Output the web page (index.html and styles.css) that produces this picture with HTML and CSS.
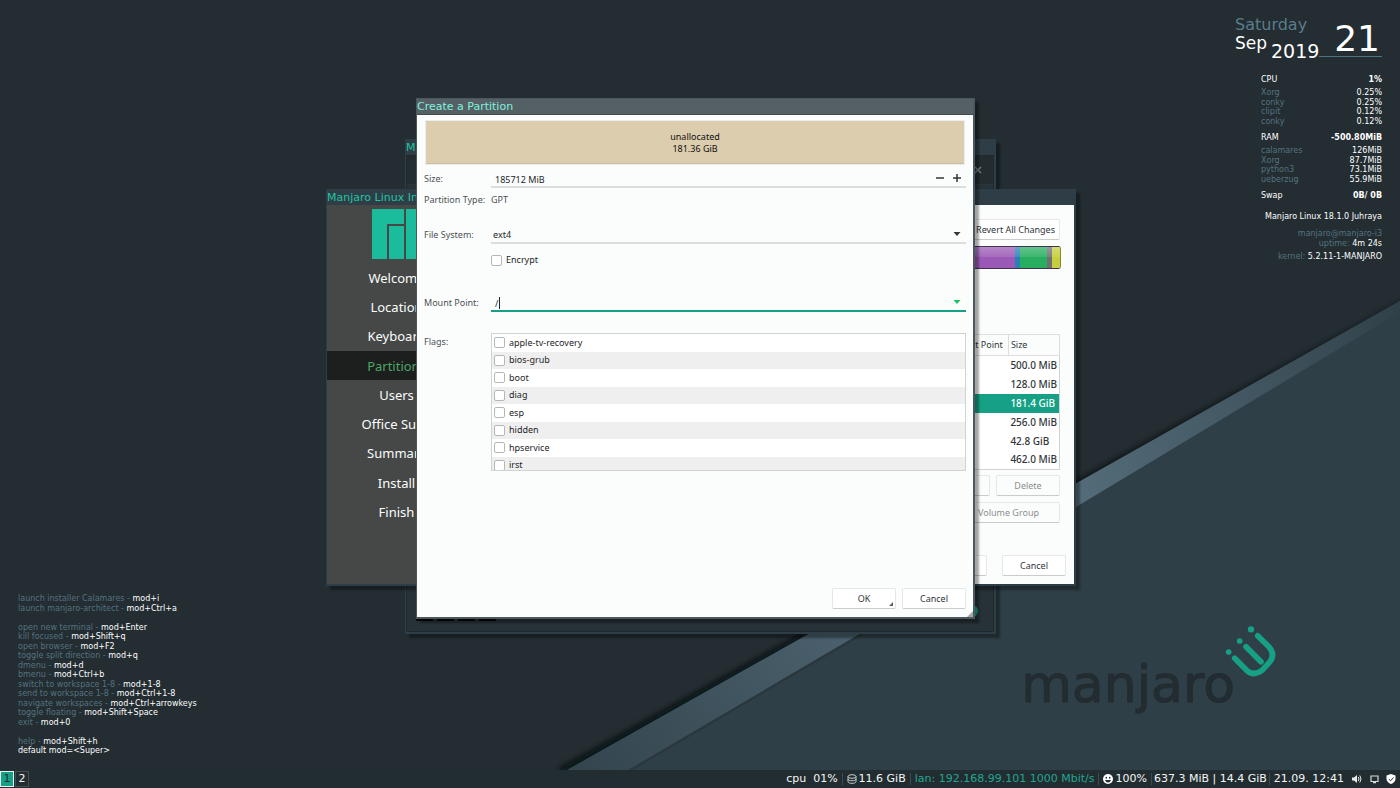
FILE: index.html
```html
<!DOCTYPE html>
<html lang="en">
<head>
<meta charset="utf-8">
<title>Create a Partition</title>
<link rel="stylesheet" href="styles.css">
</head>
<body>
<main class="desktop">
  <svg class="wallpaper" viewBox="0 0 1400 770" preserveAspectRatio="none" aria-hidden="true">
    <defs>
      <linearGradient id="band" gradientUnits="userSpaceOnUse" x1="567" y1="770" x2="1400" y2="301">
        <stop offset="0" stop-color="#33444d"/>
        <stop offset=".32" stop-color="#4a606c"/>
        <stop offset=".58" stop-color="#566f7c"/>
        <stop offset=".8" stop-color="#435863"/>
        <stop offset="1" stop-color="#304048"/>
      </linearGradient>
      <filter id="soft" x="-5%" y="-5%" width="110%" height="110%"><feGaussianBlur stdDeviation="3"/></filter>
    </defs>
    <rect width="1400" height="770" fill="#232d32"/>
    <path d="M560 770 L567 772 L1402 302 Z" fill="#05080a" stroke="#05080a" stroke-width="2" filter="url(#soft)"/>
    <path d="M567 770 L1400 301 V770 Z" fill="#2f3f47"/>
    <path d="M628 771 L1076 508" stroke="#273238" stroke-width="3" opacity=".6"/>
    <path d="M567 770 L1400 301 V312 L1076 507 L628 770 Z" fill="url(#band)"/>
  </svg>

  <div class="brand">
    <span class="brand-name">manjaro</span>
    <svg class="brand-mark" viewBox="645 42 156 156" aria-hidden="true">
      <g fill="none" stroke="#16a085" stroke-width="17" stroke-linecap="round" stroke-linejoin="round">
        <path d="M674 142 L710 178 Q730 197 756 178 L778 154 Q797 132 778 109 L743 74"/>
        <path d="M708 107 L753 152"/>
      </g>
      <g fill="#16a085"><circle cx="656" cy="123" r="8.500"/><circle cx="689" cy="90" r="8.500"/><circle cx="723" cy="55" r="9.500"/></g>
    </svg>
  </div>

  <aside class="conky">
    <div class="date">
      <div class="date-left"><span class="weekday">Saturday</span><span class="month">Sep</span></div>
      <span class="year">2019</span><span class="day">21</span>
    </div>
    <dl class="stats">
      <div class="stat head"><dt>CPU</dt><dd><b>1%</b></dd></div>
      <div class="group">
        <div class="stat"><dt>Xorg</dt><dd>0.25%</dd></div>
        <div class="stat"><dt>conky</dt><dd>0.25%</dd></div>
        <div class="stat"><dt>clipit</dt><dd>0.12%</dd></div>
        <div class="stat"><dt>conky</dt><dd>0.12%</dd></div>
      </div>
      <div class="stat head"><dt>RAM</dt><dd><b>-500.80MiB</b></dd></div>
      <div class="group">
        <div class="stat"><dt>calamares</dt><dd>126MiB</dd></div>
        <div class="stat"><dt>Xorg</dt><dd>87.7MiB</dd></div>
        <div class="stat"><dt>python3</dt><dd>73.1MiB</dd></div>
        <div class="stat"><dt>ueberzug</dt><dd>55.9MiB</dd></div>
      </div>
      <div class="stat head"><dt>Swap</dt><dd><b>0B/ 0B</b></dd></div>
    </dl>
    <p class="release">Manjaro Linux 18.1.0 Juhraya</p>
    <p class="dim">manjaro@manjaro-i3</p>
    <p class="dim">uptime: <span class="lit">4m 24s</span></p>
    <p class="dim kernel">kernel: <span class="lit">5.2.11-1-MANJARO</span></p>
  </aside>

  <ul class="hints">
    <li>launch installer Calamares - <span class="lit">mod+i</span></li>
    <li>launch manjaro-architect - <span class="lit">mod+Ctrl+a</span></li>
    <li></li>
    <li>open new terminal - <span class="lit">mod+Enter</span></li>
    <li>kill focused - <span class="lit">mod+Shift+q</span></li>
    <li>open browser - <span class="lit">mod+F2</span></li>
    <li>toggle split direction - <span class="lit">mod+q</span></li>
    <li>dmenu - <span class="lit">mod+d</span></li>
    <li>bmenu - <span class="lit">mod+Ctrl+b</span></li>
    <li>switch to workspace 1-8 - <span class="lit">mod+1-8</span></li>
    <li>send to workspace 1-8 - <span class="lit">mod+Ctrl+1-8</span></li>
    <li>navigate workspaces - <span class="lit">mod+Ctrl+arrowkeys</span></li>
    <li>toggle floating - <span class="lit">mod+Shift+Space</span></li>
    <li>exit - <span class="lit">mod+0</span></li>
    <li></li>
    <li>help - <span class="lit">mod+Shift+h</span></li>
    <li><span class="lit">default mod=&lt;Super&gt;</span></li>
  </ul>

  <section class="window hello">
    <header class="titlebar">M</header>
    <div class="hello-body">
      <div class="hello-top">
        <button class="hello-close" type="button" aria-label="Close"><svg viewBox="0 0 8 8" width="8" height="8"><path d="M1 1 L7 7 M7 1 L1 7" stroke="#7d8587" stroke-width="1.300"/></svg></button>
      </div>
      <div class="hello-foot">
        <span class="chip"></span><span class="chip"></span><span class="chip"></span><span class="chip"></span>
        <span class="knob"></span>
      </div>
    </div>
  </section>

  <section class="window installer">
    <header class="titlebar">Manjaro Linux In</header>
    <div class="installer-body">
      <nav class="steps">
        <svg class="steps-logo" viewBox="0 0 50 50" width="50" height="50" aria-hidden="true"><path fill="#1abc9c" d="M0 0H32V15H15V50H0Z M17 17H32V50H17Z M34 0H50V50H34Z"/></svg>
        <ol class="steps-list">
          <li>Welcome</li><li>Location</li><li>Keyboard</li><li class="active">Partitions</li><li>Users</li><li>Office Suite</li><li>Summary</li><li>Install</li><li>Finish</li>
        </ol>
      </nav>
      <div class="parts">
        <button class="btn revert" type="button">Revert All Changes</button>
        <div class="disk"><span class="seg purple"></span><span class="seg blue"></span><span class="seg green"></span><span class="seg grey"></span><span class="seg yellow"></span></div>
        <table class="ptable">
          <thead><tr><th class="mount">t Point</th><th>Size</th></tr></thead>
          <tbody>
            <tr><td></td><td>500.0 MiB</td></tr>
            <tr><td></td><td>128.0 MiB</td></tr>
            <tr class="selected"><td></td><td>181.4 GiB</td></tr>
            <tr><td></td><td>256.0 MiB</td></tr>
            <tr><td></td><td>42.8 GiB</td></tr>
            <tr><td></td><td>462.0 MiB</td></tr>
          </tbody>
        </table>
        <div class="btn-row edit-row"><button class="btn" type="button" disabled aria-label="Edit"></button><button class="btn" type="button" disabled>Delete</button></div>
        <div class="btn-row"><button class="btn volume" type="button" disabled>Volume Group</button></div>
        <div class="btn-row nav-row"><button class="btn" type="button" aria-label="Next"></button><button class="btn" type="button">Cancel</button></div>
      </div>
    </div>
  </section>

  <section class="window dialog" role="dialog" aria-labelledby="dialog-title">
    <header class="titlebar" id="dialog-title">Create a Partition</header>
    <form class="dialog-body">
      <div class="space"><span>unallocated</span><span>181.36 GiB</span></div>
      <div class="form">
        <label for="size">Size:</label>
        <div class="field"><input id="size" class="size" type="text" value="185712 MiB">
          <button class="step" type="button" aria-label="Decrease"><svg viewBox="0 0 8 8" width="8" height="8"><path d="M0 4H8" stroke="#31363b" stroke-width="1.500"/></svg></button>
          <button class="step" type="button" aria-label="Increase"><svg viewBox="0 0 8 8" width="8" height="8"><path d="M0 4H8M4 0V8" stroke="#31363b" stroke-width="1.500"/></svg></button>
        </div>
        <span class="type-label">Partition Type:</span><span class="type">GPT</span>
        <label class="low" for="fs">File System:</label>
        <div class="field low"><select id="fs"><option>ext4</option></select><svg class="arrow" viewBox="0 0 8 4" width="8" height="4"><path d="M0.500 0H7.500L4 4Z" fill="#31363b"/></svg></div>
        <label class="encrypt"><input class="tick" type="checkbox">Encrypt</label>
        <label class="low" for="mount">Mount Point:</label>
        <div class="field low focused"><input id="mount" type="text" value="/"><span class="caret"></span><svg class="arrow" viewBox="0 0 8 4" width="8" height="4"><path d="M0.500 0H7.500L4 4Z" fill="#1fbf62"/></svg></div>
        <span class="flags-label">Flags:</span>
        <div class="flags"><div class="flags-list">
          <label><input class="tick" type="checkbox">apple-tv-recovery</label>
          <label><input class="tick" type="checkbox">bios-grub</label>
          <label><input class="tick" type="checkbox">boot</label>
          <label><input class="tick" type="checkbox">diag</label>
          <label><input class="tick" type="checkbox">esp</label>
          <label><input class="tick" type="checkbox">hidden</label>
          <label><input class="tick" type="checkbox">hpservice</label>
          <label><input class="tick" type="checkbox">irst</label>
        </div></div>
      </div>
      <div class="actions"><button class="btn ok" type="button">OK</button><button class="btn" type="button">Cancel</button></div>
      <span class="grip"></span>
    </form>
  </section>
</main>

<footer class="bar">
  <nav class="spaces"><button class="ws current" type="button">1</button><button class="ws" type="button">2</button></nav>
  <div class="status">
    <span class="item cpu"><span>cpu</span><span>01%</span></span>
    <span class="item"><svg viewBox="0 0 10 10" width="10" height="10"><g fill="none" stroke="#c8cdce"><ellipse cx="5" cy="2.500" rx="4" ry="1.800"/><path d="M1 2.500V7.500C1 10 9 10 9 7.500V2.500M1 5C1 7.300 9 7.300 9 5"/></g></svg>11.6 GiB</span>
    <span class="item net">lan: 192.168.99.101 1000 Mbit/s</span>
    <span class="item"><svg viewBox="0 0 10 10" width="10" height="10"><circle cx="5" cy="5" r="5" fill="#fff"/><ellipse cx="3.300" cy="3.700" rx=".8" ry="1" fill="#232d32"/><ellipse cx="6.700" cy="3.700" rx=".8" ry="1" fill="#232d32"/><path d="M2 6H8Q7 8.500 5 8.500T2 6" fill="#232d32"/></svg>100%</span>
    <span class="item tight">637.3 MiB | 14.4 GiB</span>
    <span class="item">21.09. 12:41</span>
  </div>
  <div class="tray">
    <svg viewBox="0 0 10 10" width="10" height="10"><path d="M0 3.500H2L5 1V9L2 6.500H0Z" fill="#e8eaea"/><path d="M6.300 3Q7.700 5 6.300 7M7.800 1.500Q10.200 5 7.800 8.500" fill="none" stroke="#e8eaea"/></svg>
    <svg viewBox="0 0 10 10" width="10" height="10"><path d="M2 2H9V7.500H2ZM4 8.700H7" fill="none" stroke="#d5d9da" stroke-width="1.200"/></svg>
    <svg viewBox="0 0 10 10" width="10" height="10"><path d="M5 0L9.500 1.500V5Q9 8.500 5 10Q1 8.500 .5 5V1.500Z" fill="#fff"/><path d="M2.700 5L4.500 6.800L7.500 3.500" fill="none" stroke="#232d32"/></svg>
  </div>
</footer>
</body>
</html>
```
FILE: styles.css
```css
* { box-sizing: border-box; }

body {
  margin: 0;
  min-height: 100vh;
  display: flex;
  flex-direction: column;
  background: #232d32;
  font-family: "DejaVu Sans", sans-serif;
  overflow: hidden;
}

button, input, select { font: inherit; color: inherit; margin: 0; }
ul, ol, dl, dd, p { margin: 0; padding: 0; }
ul, ol { list-style: none; }

.desktop { position: relative; flex: 1; }
.wallpaper { position: absolute; inset: 0; width: 100%; height: 100%; }

/* wallpaper brand */
.brand { position: absolute; right: 123px; bottom: 47px; display: flex; }
.brand-name { font-size: 52px; line-height: 60px; color: #222c31; margin: 29px 0 9px; -webkit-text-stroke: 1px #222c31; }
.brand-mark { width: 52px; height: 52px; margin-left: -10px; }

/* system monitor */
.conky { position: absolute; top: 16px; right: 18px; width: 147px; color: #fff; font-size: 8px; line-height: 10px; }
.date { display: flex; align-items: flex-start; height: 41px; margin-bottom: 18px; }
.date-left { display: flex; flex-direction: column; }
.weekday { width: 36px; font-size: 16px; line-height: 18px; color: #5a7c8a; white-space: nowrap; }
.month { font-size: 17px; line-height: 18px; }
.year { font-size: 19px; line-height: 22px; margin-top: 24px; }
.day { flex: 1; text-align: right; font-size: 36px; line-height: 40px; padding: 3px 2px 0 0; height: 41px; border-bottom: 1px solid #4f7280; }
.stats { margin-left: 26px; }
.stat { display: flex; justify-content: space-between; color: #55737f; }
.stat dd, .lit { color: #fff; }
.stat.head { color: #fff; }
.group { display: grid; grid-template-rows: repeat(4, 1fr); height: 38px; margin: 3px 0 7px; }
.group .stat { height: 9px; }
.release, .dim { text-align: right; white-space: nowrap; }
.release { margin: 11px 0 7px; }
.dim { color: #55737f; }
.kernel { margin-top: 3px; }

/* key hints */
.hints { position: absolute; left: 18px; bottom: 14px; height: 162px; display: grid; grid-template-rows: repeat(17, 1fr); font-size: 8px; line-height: 10px; color: #55737f; white-space: nowrap; }
.hints li { height: 9px; }

/* windows */
.window { position: absolute; display: flex; flex-direction: column; border: 1px solid #2f3e46; border-width: 1px 2px 2px 1px; box-shadow: 4px 4px 2px rgba(0, 0, 0, .35); overflow: hidden; }
.titlebar { height: 15px; background: #2f3e46; color: #1fc4a4; font-size: 11px; line-height: 15px; white-space: nowrap; }

.hello { left: 405px; top: 139px; width: 591px; height: 495px; background: #263238; }
.hello-body { flex: 1; display: flex; flex-direction: column; border: 1px solid #1f282c; }
.hello-top { display: flex; justify-content: flex-end; height: 29px; padding: 10px 11px; background: #222c31; border-bottom: 1px solid #2a363c; }
.hello-close { display: flex; padding: 0; border: 0; background: none; }
.hello-foot { margin-top: auto; display: flex; align-items: flex-end; gap: 4px; padding: 0 15px 10px 9px; }
.chip { width: 17px; height: 12px; background: #050708; }
.knob { width: 12px; height: 12px; border-radius: 50%; background: #16a085; margin: 0 0 4px auto; }

.installer { left: 326px; top: 189px; width: 750px; height: 397px; background: #fbfdfc; color: #31363b; font-family: "Noto Sans", sans-serif; font-size: 10px; }
.installer .titlebar, .dialog .titlebar { font-family: "DejaVu Sans", sans-serif; }
.installer-body { flex: 1; display: flex; }
.steps { width: 139px; background: #454846; display: flex; flex-direction: column; align-items: center; padding-top: 4px; }
.steps-logo { margin-bottom: 4px; }
.steps-list { width: 100%; height: 263px; display: grid; grid-template-rows: repeat(9, 1fr); color: #fbfdfc; font-size: 13px; line-height: 30px; text-align: center; }
.steps-list li { height: 29px; }
.steps-list .active { background: #1d1f1e; color: #4ba765; }
.parts { flex: 1; display: flex; flex-direction: column; padding: 14px 14px 0 10px; }

.btn { height: 21px; min-width: 64px; padding: 0 4px; background: #fff; border: 1px solid #e6e8e7; border-bottom-color: #c9cccb; border-radius: 2px; font-family: "Noto Sans", sans-serif; font-size: 9px; line-height: 18px; color: #31363b; }
.btn:disabled { color: #8b8e90; background: #fbfdfc; }
.revert { align-self: flex-end; }
.disk { display: flex; height: 23px; margin: 6px -1px 65px 0; border: 1px solid #3f3350; border-right-color: #85892a; border-radius: 3px; overflow: hidden; }
.seg { width: 5px; background-image: linear-gradient(rgba(255, 255, 255, .28), rgba(255, 255, 255, .1) 48%, transparent 50%); }
.purple { flex: 1; background-color: #9b59b6; }
.blue { background-color: #2980b9; }
.green { width: 27px; background-color: #27ae60; }
.grey { background-color: #707070; }
.yellow { width: 8px; background-color: #c5ce3b; }
.ptable { border-collapse: collapse; border: 1px solid #d0d3d2; background: #fff; }
.ptable th { height: 21px; padding: 0 2px; text-align: left; font-size: 9px; font-weight: 400; background: #fbfdfc; border: 1px solid #dcdfde; line-height: 18px; width: 51px; }
.ptable th.mount { width: auto; text-align: right; padding-right: 5px; }
.ptable td { height: 19px; padding: 0 2px; line-height: 17px; white-space: nowrap; font-weight: 500; }
.selected { background: #16a085; color: #fff; }
.btn-row { display: flex; justify-content: flex-end; gap: 6px; margin-top: 6px; }
.edit-row { margin-top: 5px; }
.volume { padding: 0 20px 0 50px; }
.nav-row { gap: 15px; margin: 32px -6px 0 0; }

.dialog { left: 416px; top: 98px; width: 559px; height: 521px; background: #fbfdfc; border-color: #4d585d; color: #4d5154; font-family: "Noto Sans", sans-serif; font-size: 9px; line-height: 12px; }
.dialog .titlebar { height: 16px; background: #556065; color: #80f0dd; border-bottom: 1px solid #3f494e; }
.dialog-body { position: relative; flex: 1; display: flex; flex-direction: column; padding: 6px 7px 8px; }
.space { display: flex; flex-direction: column; align-items: center; justify-content: center; height: 43px; margin: 0 2px; background: #dccdae; border-bottom: 1px solid #cbbd9f; outline: 1px solid #eceeed; color: #111; padding-top: 1px; }
.form { margin-top: 6px; display: grid; grid-template-columns: 67px 1fr; grid-template-rows: 18px 24px 32px 32px 36px 159px; }
.form > * { align-self: center; }
.form > .low { align-self: end; }
label.low { line-height: 18px; }
.field { position: relative; display: flex; align-items: center; height: 18px; gap: 9px; padding-right: 5px; border-bottom: 2px solid #dadddc; color: #232629; }
.field input, .field select { flex: 1; min-width: 0; height: 16px; border: 0; padding: 2px 4px 0; background: none; appearance: none; outline: 0; line-height: 14px; }
.field select { padding: 2px 2px 0; }
.focused { border-color: #16a085; }
.caret { position: absolute; left: 8px; top: 3px; width: 1px; height: 12px; background: #232629; }
.step { display: flex; padding: 0; border: 0; background: none; }
.encrypt { grid-column: 2; display: flex; align-items: center; gap: 4px; color: #232629; }
.tick { appearance: none; width: 11px; height: 11px; border: 1px solid #b4b7b8; border-radius: 2px; background: #fff; }
.form > .flags-label { align-self: start; padding-top: 24px; }
.form > .flags { align-self: end; height: 138px; border: 1px solid #d0d3d2; overflow: hidden; background: #fff; }
.flags-list { display: grid; grid-template-rows: repeat(8, 1fr); height: 140px; color: #232629; }
.flags-list label { display: flex; align-items: center; gap: 4px; padding-left: 2px; }
.flags-list label:nth-child(even) { background: #efefef; }
.actions { margin-top: auto; display: flex; justify-content: flex-end; gap: 6px; }
.ok { position: relative; }
.ok::after { content: ""; position: absolute; right: 2px; bottom: 2px; border: 2px solid #5c6063; border-top-color: transparent; border-left-color: transparent; }
.grip { position: absolute; right: 0; bottom: 0; border: 3px solid #a5a8a9; border-top-color: transparent; border-left-color: transparent; }

/* bottom bar */
.bar { position: relative; display: flex; align-items: center; height: 18px; background: #222d32; color: #f4f6f6; font-size: 11px; line-height: 16px; white-space: nowrap; }
.spaces { display: flex; gap: 1px; margin-right: auto; }
.ws { width: 14px; height: 16px; padding: 0; border: 1px solid #454d50; background: #232d32; line-height: 14px; }
.current { background: #16a085; border-color: #e5f5f1; color: #1f2a2e; }
.status { display: flex; align-items: center; }
.item { display: flex; align-items: center; gap: 2px; padding: 0 4px; border-left: 1px solid #3f4a4f; line-height: 12px; }
.item.cpu { gap: 7px; border-left: 0; }
.tight { padding: 0 2px; }
.net { color: #24a48f; }
.tray { display: flex; gap: 7px; padding: 0 4px; }
```
